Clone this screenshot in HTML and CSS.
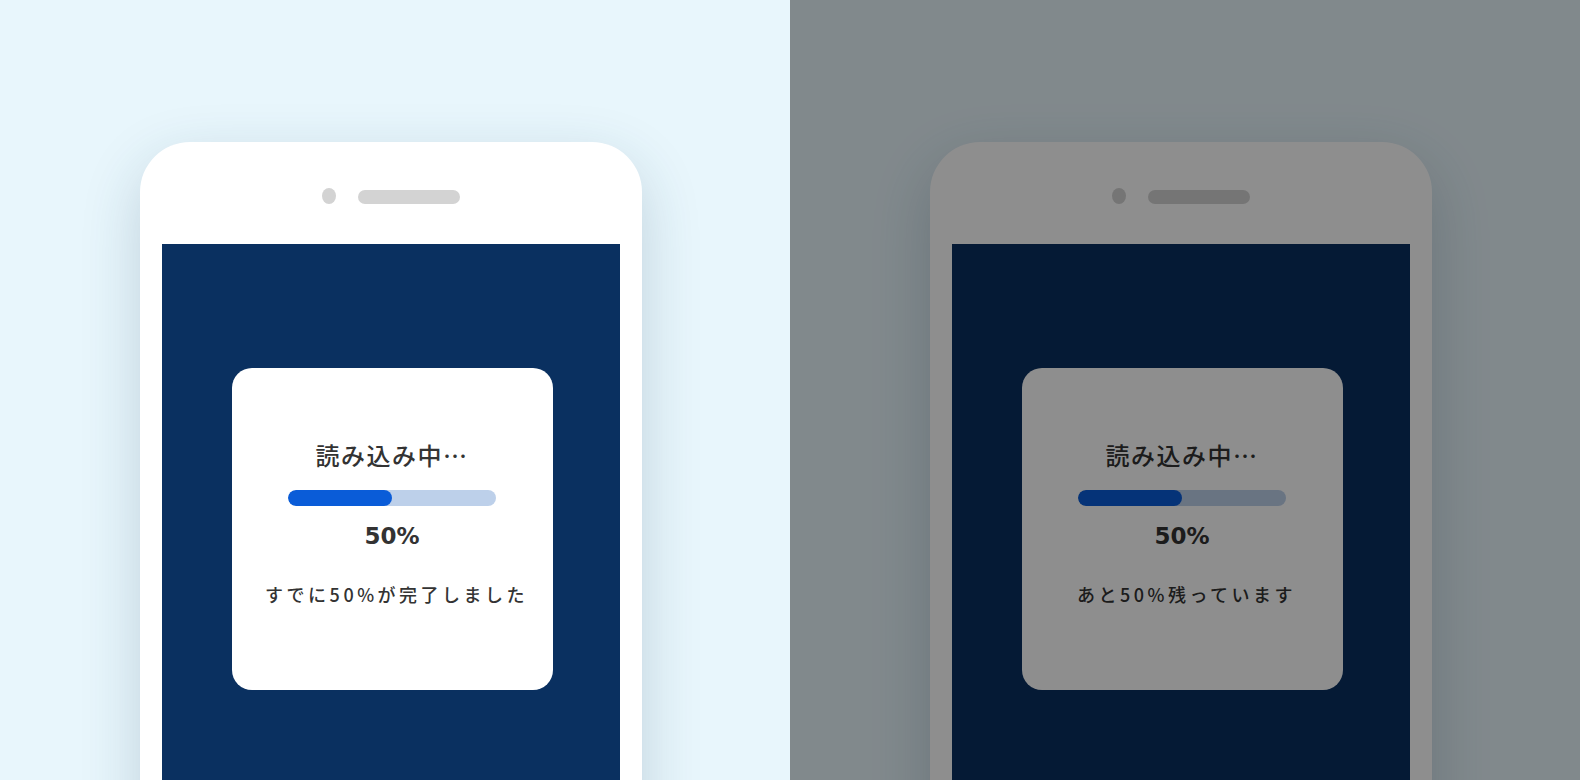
FILE: index.html
```html
<!DOCTYPE html>
<html lang="ja">
<head>
    <meta charset="UTF-8">
    <meta name="viewport" content="width=device-width, initial-scale=1.0">
    <title>読み込み中</title>
    <link rel="stylesheet" href="styles.css">
</head>
<body>
    <div class="stage">
        <!-- Progress shown as done so far -->
        <section class="panel">
            <div class="phone">
                <div class="phone-top">
                    <span class="camera"></span>
                    <span class="speaker"></span>
                </div>
                <div class="screen">
                    <div class="loader">
                        <p class="loader-title">読み込み中…</p>
                        <div class="bar"><div class="bar-fill" style="width: 50%"></div></div>
                        <p class="loader-percent">50%</p>
                        <p class="loader-note">すでに50%が完了しました</p>
                    </div>
                </div>
            </div>
        </section>

        <!-- Progress shown as what is left, dimmed -->
        <section class="panel panel-dim">
            <div class="phone">
                <div class="phone-top">
                    <span class="camera"></span>
                    <span class="speaker"></span>
                </div>
                <div class="screen">
                    <div class="loader">
                        <p class="loader-title">読み込み中…</p>
                        <div class="bar"><div class="bar-fill" style="width: 50%"></div></div>
                        <p class="loader-percent">50%</p>
                        <p class="loader-note">あと50%残っています</p>
                    </div>
                </div>
            </div>
        </section>
    </div>
</body>
</html>
```

FILE: styles.css
```css
body {
    margin: 0;
    font-family: "Noto Sans CJK JP", "Noto Sans", sans-serif;
    color: #333;
}

.stage {
    display: flex;
    width: 1580px;
    height: 780px;
}

.panel {
    position: relative;
    width: 790px;
    height: 780px;
    overflow: hidden;
    background-color: #e8f6fc;
}

.panel-dim::after {
    content: "";
    position: absolute;
    top: 0;
    left: 0;
    width: 100%;
    height: 100%;
    background-color: rgba(0, 0, 0, 0.443);
}

.phone {
    width: 502px;
    height: 760px;
    margin: 142px 0 0 140px;
    padding: 0 22px;
    box-sizing: border-box;
    background-color: white;
    border-radius: 50px 50px 0 0;
    box-shadow: 0 20px 60px rgba(30, 70, 95, 0.2);
}

.phone-top {
    height: 102px;
    padding-bottom: 40px;
    box-sizing: border-box;
    display: flex;
    align-items: flex-end;
    justify-content: center;
    gap: 22px;
}

.camera {
    width: 14px;
    height: 16px;
    border-radius: 50%;
    background-color: #d3d3d3;
}

.speaker {
    width: 102px;
    height: 14px;
    border-radius: 7px;
    background-color: #d3d3d3;
}

.screen {
    height: 700px;
    padding-top: 124px;
    box-sizing: border-box;
    background-color: #0a3060;
}

.loader {
    width: 321px;
    height: 322px;
    margin: 0 auto;
    padding-top: 69px;
    box-sizing: border-box;
    background-color: white;
    border-radius: 20px;
    text-align: center;
    transform: translateX(1px);
}

.loader p {
    margin: 0;
}

.loader-title {
    font-size: 24px;
    font-weight: 500;
    line-height: 36px;
    letter-spacing: 1.5px;
}

.bar {
    width: 208px;
    height: 16px;
    margin: 17px auto 0;
    border-radius: 8px;
    background-color: #bdd0ea;
    overflow: hidden;
}

.bar-fill {
    height: 100%;
    border-radius: 8px;
    background-color: #0a5cd8;
}

.loader-percent {
    margin-top: 12px !important;
    font-family: "DejaVu Sans", sans-serif;
    font-weight: bold;
    font-size: 23px;
    line-height: 36px;
}

.loader-note {
    margin-top: 27px !important;
    padding-left: 9px;
    font-size: 18px;
    font-weight: 500;
    line-height: 27px;
    letter-spacing: 3.5px;
}
```
